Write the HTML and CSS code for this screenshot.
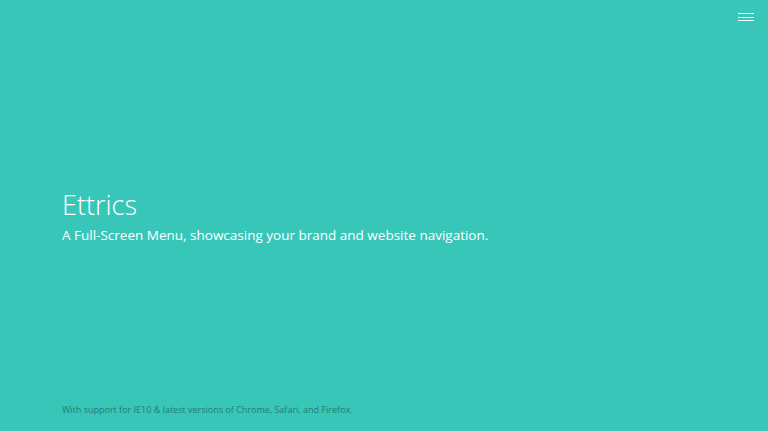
FILE: index.html
```html
<!DOCTYPE html>
<html lang="en">
<head>
<meta charset="utf-8">
<title>Ettrics</title>
<link rel="stylesheet" href="styles.css">
</head>
<body>
<div class="page">
  <header class="topbar">
    <button class="menu-btn" aria-label="Menu">
      <span class="bar"></span>
      <span class="bar"></span>
      <span class="bar"></span>
    </button>
  </header>
  <main class="hero">
    <h1 class="title">Ettrics</h1>
    <p class="subtitle">A Full-Screen Menu, showcasing your brand and website navigation.</p>
  </main>
  <footer class="footer">
    <p class="note">With support for IE10 &amp; latest versions of Chrome, Safari, and Firefox.</p>
  </footer>
</div>
</body>
</html>
```
FILE: styles.css
```css
html, body {
  margin: 0;
  padding: 0;
  height: 100%;
}
body {
  background: #38c6b9;
  font-family: "Open Sans", "Noto Sans", sans-serif;
  color: #fff;
  overflow: hidden;
}
.page {
  height: 100%;
  display: flex;
  flex-direction: column;
  box-sizing: border-box;
  padding: 0 62px;
}
.topbar {
  display: flex;
  justify-content: flex-end;
  height: 40px;
  margin-right: -48px;
}
.menu-btn {
  margin-top: 13px;
  width: 16px;
  height: 8px;
  padding: 0;
  border: 0;
  background: none;
  display: flex;
  flex-direction: column;
  justify-content: space-between;
}
.bar {
  display: block;
  width: 16px;
  height: 1px;
  background: #fff;
}
.hero {
  flex: 1;
  display: flex;
  flex-direction: column;
  justify-content: center;
  padding-bottom: 8px;
}
.title {
  margin: 0 0 3px;
  font-weight: 300;
  font-size: 27px;
  line-height: 32px;
}
.subtitle {
  margin: 0;
  font-size: 13.5px;
  line-height: 22px;
}
.footer {
  height: 28px;
}
.note {
  margin: 0;
  font-size: 9px;
  line-height: 14px;
  color: #1f7f75;
}
```
